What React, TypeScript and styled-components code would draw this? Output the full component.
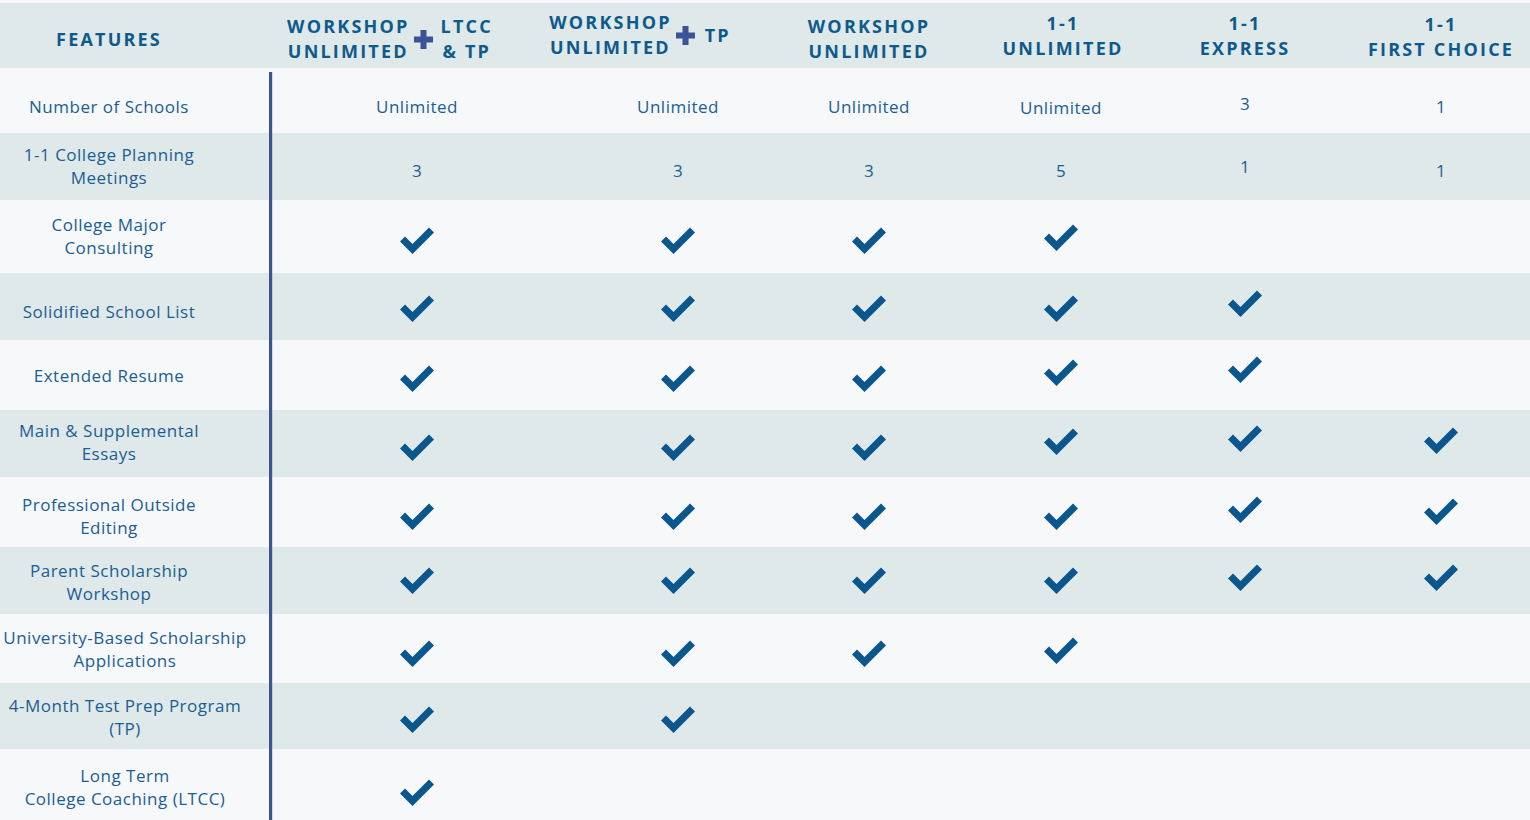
import React from "react";
import styled, { createGlobalStyle } from "styled-components";

const GlobalStyle = createGlobalStyle`
  html, body {
    margin: 0;
    padding: 0;
    background: #f6f8fa;
  }
  body {
    font-family: "Open Sans", "Noto Sans", sans-serif;
  }
`;

const TRACKS = "269px 3px 290px 232px 150px 234px 134px 218px";
const SHADE = "#dfe9ea";
const LIGHT = "#f6f8fa";
const INK = "#1b5e93";
const HEAD_INK = "#0e5a8c";
const CHECK = "#0b568c";
const RULE = "#3a5496";

const Page = styled.div`
  padding-top: 3px;
  overflow: hidden;
`;

const Row = styled.div<{ $h: number; $shade: boolean }>`
  display: grid;
  grid-template-columns: ${TRACKS};
  height: ${(p) => p.$h}px;
  background: ${(p) => (p.$shade ? SHADE : LIGHT)};
`;

const HeadCell = styled.div<{ $last?: boolean }>`
  display: flex;
  align-items: center;
  justify-content: center;
  padding-left: ${(p) => (p.$last ? 40 : 0)}px;
`;

const HeadInner = styled.div<{ $nudge?: number; $dy?: number }>`
  display: flex;
  align-items: center;
  margin-left: ${(p) => (p.$nudge || 0) * 2}px;
  margin-top: ${(p) => (p.$dy || 0) * 2}px;
`;

const HeadText = styled.div`
  font-size: 18px;
  font-weight: 700;
  letter-spacing: 2.2px;
  line-height: 25px;
  color: ${HEAD_INK};
  text-align: center;
  white-space: nowrap;
`;

const FeaturesHead = styled(HeadText)`
  padding-right: 51px;
  margin-top: 8px;
`;

const Plus = styled.svg<{ $gap: number }>`
  width: 19px;
  height: 19px;
  margin: 0 ${(p) => p.$gap}px 0 4px;
  flex: none;
`;

const FeatureCell = styled.div<{ $pad: number }>`
  display: flex;
  align-items: center;
  justify-content: center;
  padding-right: ${(p) => p.$pad}px;
  font-size: 17px;
  letter-spacing: 0.5px;
  line-height: 23px;
  color: ${INK};
  text-align: center;
`;

const Label = styled.div<{ $dy: number }>`
  margin-top: ${(p) => p.$dy * 2 - 1}px;
`;

const Rule = styled.div`
  background: ${RULE};
  box-shadow: 1px 0 0 rgba(58, 84, 150, 0.18);
`;

const RuleBar = styled.div`
  height: calc(100% - 4px);
  margin-top: 4px;
  background: ${RULE};
  box-shadow: 1px 0 0 rgba(58, 84, 150, 0.18);
`;

const ValueCell = styled.div<{ $last?: boolean }>`
  display: flex;
  align-items: center;
  justify-content: center;
  padding-left: ${(p) => (p.$last ? 40 : 0)}px;
`;

const ValueText = styled.span<{ $dy: number }>`
  font-size: 17px;
  letter-spacing: 0.5px;
  line-height: 23px;
  color: ${INK};
  margin-top: ${(p) => p.$dy * 2 - 1}px;
`;

const Check = styled.svg<{ $dy: number }>`
  width: 34px;
  height: 27px;
  margin-top: ${(p) => p.$dy * 2}px;
`;

type Cell = null | { text?: string; check?: boolean; dy: number };

const t = (text: string, dy = 0): Cell => ({ text, dy });
const c = (dy = 3.5): Cell => ({ check: true, dy });
const _ = null;

type Feature = { label: string[]; h: number; dy?: number; pad?: number; cells: Cell[] };

const features: Feature[] = [
  {
    label: ["Number of Schools"],
    h: 65,
    dy: 6.5,
    cells: [t("Unlimited", 6.5), t("Unlimited", 6.5), t("Unlimited", 6.5), t("Unlimited", 7), t("3", 3.5), t("1", 6.5)],
  },
  {
    label: ["1-1 College Planning", "Meetings"],
    h: 67,
    cells: [t("3", 4.5), t("3", 4.5), t("3", 4.5), t("5", 4.5), t("1", 0.5), t("1", 4.5)],
  },
  {
    label: ["College Major", "Consulting"],
    h: 73,
    cells: [c(), c(), c(), c(0.5), _, _],
  },
  {
    label: ["Solidified School List"],
    h: 67,
    dy: 5,
    cells: [c(1.5), c(1.5), c(1.5), c(1.5), c(-3.5), _],
  },
  {
    label: ["Extended Resume"],
    h: 70,
    dy: 1,
    cells: [c(3), c(3), c(3), c(-3), c(-6), _],
  },
  {
    label: ["Main & Supplemental", "Essays"],
    h: 67,
    dy: -1,
    cells: [c(3.5), c(3.5), c(3.5), c(-2.5), c(-5.5), c(-3.5)],
  },
  {
    label: ["Professional Outside", "Editing"],
    h: 70,
    dy: 4,
    cells: [c(4), c(4), c(4), c(4), c(-3), c(-1)],
  },
  {
    label: ["Parent Scholarship", "Workshop"],
    h: 67,
    dy: 2,
    cells: [c(0), c(0), c(0), c(0), c(-3.5), c(-3.5)],
  },
  {
    label: ["University-Based Scholarship", "Applications"],
    h: 69,
    dy: 1,
    pad: 19,
    cells: [c(4.5), c(4.5), c(4.5), c(1.5), _, _],
  },
  {
    label: ["4-Month Test Prep Program", "(TP)"],
    h: 66,
    dy: 1,
    pad: 19,
    cells: [c(3), c(3), _, _, _, _],
  },
  {
    label: ["Long Term", "College Coaching (LTCC)"],
    h: 76,
    pad: 19,
    cells: [c(5), _, _, _, _, _],
  },
];

type Plan = { left: string[]; right?: string[]; nudge?: number; dy?: number; gap?: number };

const plans: Plan[] = [
  { left: ["WORKSHOP", "UNLIMITED"], right: ["LTCC", "& TP"], nudge: -27, dy: 3.5, gap: 8 },
  { left: ["WORKSHOP", "UNLIMITED"], right: ["TP"], nudge: -38, dy: -0.5, gap: 10 },
  { left: ["WORKSHOP", "UNLIMITED"], dy: 3 },
  { left: ["1-1", "UNLIMITED"], nudge: 2, dy: 0 },
  { left: ["1-1", "EXPRESS"], dy: 0 },
  { left: ["1-1", "FIRST CHOICE"], dy: 1 },
];

const lines = (parts: string[]) =>
  parts.map((p, i) => (
    <React.Fragment key={i}>
      {i > 0 && <br />}
      {p}
    </React.Fragment>
  ));

const PlusIcon = ({ gap }: { gap: number }) => (
  <Plus $gap={gap} viewBox="0 0 19 19">
    <rect x="0" y="6.5" width="19" height="6" fill={RULE} />
    <rect x="6.5" y="0" width="6" height="19" fill={RULE} />
  </Plus>
);

const CheckIcon = ({ dy }: { dy: number }) => (
  <Check $dy={dy} viewBox="0 0 34 27">
    <polygon points="0,14.5 5,9.5 12.5,17 29,0.5 34,5.5 12.5,27" fill={CHECK} />
  </Check>
);

const App = () => {
  return (
    <Page>
      <GlobalStyle />
      <Row $h={65} $shade>
        <HeadCell>
          <FeaturesHead>FEATURES</FeaturesHead>
        </HeadCell>
        <div />
        {plans.map((plan, i) => (
          <HeadCell key={i} $last={i === plans.length - 1}>
            <HeadInner $nudge={plan.nudge} $dy={plan.dy}>
              <HeadText>{lines(plan.left)}</HeadText>
              {plan.right && (
                <>
                  <PlusIcon gap={plan.gap || 8} />
                  <HeadText>{lines(plan.right)}</HeadText>
                </>
              )}
            </HeadInner>
          </HeadCell>
        ))}
      </Row>
      {features.map((f, r) => (
        <Row key={r} $h={f.h} $shade={r % 2 === 1}>
          <FeatureCell $pad={f.pad ?? 51}>
            <Label $dy={f.dy ?? 0}>{lines(f.label)}</Label>
          </FeatureCell>
          {r === 0 ? <RuleBar /> : <Rule />}
          {f.cells.map((cell, i) => (
            <ValueCell key={i} $last={i === f.cells.length - 1}>
              {cell?.text && <ValueText $dy={cell.dy}>{cell.text}</ValueText>}
              {cell?.check && <CheckIcon dy={cell.dy} />}
            </ValueCell>
          ))}
        </Row>
      ))}
    </Page>
  );
};

export default App;
